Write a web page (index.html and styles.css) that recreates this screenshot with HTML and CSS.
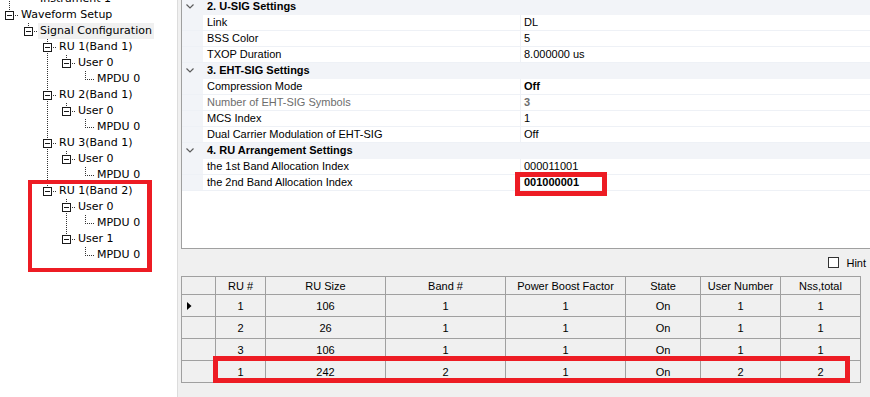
FILE: index.html
```html
<!DOCTYPE html>
<html>
<head>
<meta charset="utf-8">
<link rel="stylesheet" href="styles.css">
</head>
<body>
<svg class="defs" width="0" height="0" aria-hidden="true">
  <defs>
    <symbol id="pipe" viewBox="0 0 19 16"><line class="dot" x1="9.5" y1="0" x2="9.5" y2="16"/></symbol>
    <symbol id="boxT" viewBox="0 0 19 16">
      <line class="dot" x1="9.5" y1="0" x2="9.5" y2="4"/>
      <line class="dot" x1="15" y1="8.5" x2="19" y2="8.5"/>
      <rect class="bx" x="5.5" y="4.5" width="8" height="8"/>
      <line class="mn" x1="7" y1="8.5" x2="12" y2="8.5"/>
    </symbol>
    <symbol id="boxTB" viewBox="0 0 19 16">
      <line class="dot" x1="9.5" y1="0" x2="9.5" y2="4"/>
      <line class="dot" x1="9.5" y1="14" x2="9.5" y2="16"/>
      <line class="dot" x1="15" y1="8.5" x2="19" y2="8.5"/>
      <rect class="bx" x="5.5" y="4.5" width="8" height="8"/>
      <line class="mn" x1="7" y1="8.5" x2="12" y2="8.5"/>
    </symbol>
    <symbol id="leaf" viewBox="0 0 19 16">
      <line class="dot" x1="9.5" y1="0" x2="9.5" y2="9"/>
      <line class="dot" x1="11" y1="8.5" x2="19" y2="8.5"/>
    </symbol>
  </defs>
</svg>
<div class="app">
  <div class="tree">
    <div class="tree-list">
      <div class="tn"><svg class="g"><use href="#pipe"/></svg><svg class="g"><use href="#leaf"/></svg><span class="lbl">Instrument 1</span></div>
      <div class="tn"><svg class="g"><use href="#boxT"/></svg><span class="lbl">Waveform Setup</span></div>
      <div class="tn"><span class="g"></span><svg class="g"><use href="#boxT"/></svg><span class="lbl sel">Signal Configuration</span></div>

      <div class="tn"><span class="g"></span><span class="g"></span><svg class="g"><use href="#boxTB"/></svg><span class="lbl">RU 1(Band 1)</span></div>
      <div class="tn"><span class="g"></span><span class="g"></span><svg class="g"><use href="#pipe"/></svg><svg class="g"><use href="#boxT"/></svg><span class="lbl">User 0</span></div>
      <div class="tn"><span class="g"></span><span class="g"></span><svg class="g"><use href="#pipe"/></svg><span class="g"></span><svg class="g"><use href="#leaf"/></svg><span class="lbl">MPDU 0</span></div>

      <div class="tn"><span class="g"></span><span class="g"></span><svg class="g"><use href="#boxTB"/></svg><span class="lbl">RU 2(Band 1)</span></div>
      <div class="tn"><span class="g"></span><span class="g"></span><svg class="g"><use href="#pipe"/></svg><svg class="g"><use href="#boxT"/></svg><span class="lbl">User 0</span></div>
      <div class="tn"><span class="g"></span><span class="g"></span><svg class="g"><use href="#pipe"/></svg><span class="g"></span><svg class="g"><use href="#leaf"/></svg><span class="lbl">MPDU 0</span></div>

      <div class="tn"><span class="g"></span><span class="g"></span><svg class="g"><use href="#boxTB"/></svg><span class="lbl">RU 3(Band 1)</span></div>
      <div class="tn"><span class="g"></span><span class="g"></span><svg class="g"><use href="#pipe"/></svg><svg class="g"><use href="#boxT"/></svg><span class="lbl">User 0</span></div>
      <div class="tn"><span class="g"></span><span class="g"></span><svg class="g"><use href="#pipe"/></svg><span class="g"></span><svg class="g"><use href="#leaf"/></svg><span class="lbl">MPDU 0</span></div>

      <div class="tn"><span class="g"></span><span class="g"></span><svg class="g"><use href="#boxT"/></svg><span class="lbl">RU 1(Band 2)</span></div>
      <div class="tn"><span class="g"></span><span class="g"></span><span class="g"></span><svg class="g"><use href="#boxTB"/></svg><span class="lbl">User 0</span></div>
      <div class="tn"><span class="g"></span><span class="g"></span><span class="g"></span><svg class="g"><use href="#pipe"/></svg><svg class="g"><use href="#leaf"/></svg><span class="lbl">MPDU 0</span></div>
      <div class="tn"><span class="g"></span><span class="g"></span><span class="g"></span><svg class="g"><use href="#boxT"/></svg><span class="lbl">User 1</span></div>
      <div class="tn"><span class="g"></span><span class="g"></span><span class="g"></span><span class="g"></span><svg class="g"><use href="#leaf"/></svg><span class="lbl">MPDU 0</span></div>
    </div>
  </div>

  <div class="main">
    <div class="pgrid">
      <div class="pg-rows">
        <div class="pr pc"><span class="pm"><svg class="chev" width="8" height="5" viewBox="0 0 8 5"><polyline points="0.5,0.5 4,4 7.5,0.5"/></svg></span><span class="pt">2. U-SIG Settings</span></div>
        <div class="pr"><span class="pm"></span><span class="pn">Link</span><span class="pv">DL</span></div>
        <div class="pr"><span class="pm"></span><span class="pn">BSS Color</span><span class="pv">5</span></div>
        <div class="pr"><span class="pm"></span><span class="pn">TXOP Duration</span><span class="pv">8.000000 us</span></div>
        <div class="pr pc"><span class="pm"><svg class="chev" width="8" height="5" viewBox="0 0 8 5"><polyline points="0.5,0.5 4,4 7.5,0.5"/></svg></span><span class="pt">3. EHT-SIG Settings</span></div>
        <div class="pr"><span class="pm"></span><span class="pn">Compression Mode</span><span class="pv b">Off</span></div>
        <div class="pr ro"><span class="pm"></span><span class="pn">Number of EHT-SIG Symbols</span><span class="pv b">3</span></div>
        <div class="pr"><span class="pm"></span><span class="pn">MCS Index</span><span class="pv">1</span></div>
        <div class="pr"><span class="pm"></span><span class="pn">Dual Carrier Modulation of EHT-SIG</span><span class="pv">Off</span></div>
        <div class="pr pc"><span class="pm"><svg class="chev" width="8" height="5" viewBox="0 0 8 5"><polyline points="0.5,0.5 4,4 7.5,0.5"/></svg></span><span class="pt">4. RU Arrangement Settings</span></div>
        <div class="pr"><span class="pm"></span><span class="pn">the 1st Band Allocation Index</span><span class="pv">000011001</span></div>
        <div class="pr"><span class="pm"></span><span class="pn">the 2nd Band Allocation Index</span><span class="pv b">001000001</span></div>
      </div>
    </div>

    <div class="hintbar">
      <span class="check"></span><span class="hint">Hint</span>
    </div>

    <div class="dgrid">
      <div class="dc"></div><div class="dc">RU #</div><div class="dc">RU Size</div><div class="dc">Band #</div><div class="dc">Power Boost Factor</div><div class="dc">State</div><div class="dc">User Number</div><div class="dc">Nss,total</div>
      <div class="dc rh"><svg width="5" height="8" viewBox="0 0 5 8"><polygon points="0,0 4.5,4 0,8"/></svg></div><div class="dc">1</div><div class="dc">106</div><div class="dc">1</div><div class="dc">1</div><div class="dc">On</div><div class="dc">1</div><div class="dc">1</div>
      <div class="dc rh"></div><div class="dc">2</div><div class="dc">26</div><div class="dc">1</div><div class="dc">1</div><div class="dc">On</div><div class="dc">1</div><div class="dc">1</div>
      <div class="dc rh"></div><div class="dc">3</div><div class="dc">106</div><div class="dc">1</div><div class="dc">1</div><div class="dc">On</div><div class="dc">1</div><div class="dc">1</div>
      <div class="dc rh"></div><div class="dc">1</div><div class="dc">242</div><div class="dc">2</div><div class="dc">1</div><div class="dc">On</div><div class="dc">2</div><div class="dc">2</div>
    </div>
  </div>
</div>

<div class="mark mark-tree"></div>
<div class="mark mark-value"></div>
<div class="mark mark-row"></div>
</body>
</html>
```

FILE: styles.css
```css
* { box-sizing: border-box; }
html, body { margin: 0; padding: 0; }
body {
  width: 870px;
  height: 397px;
  overflow: hidden;
  position: relative;
  background: #f0f0f0;
}
.defs { display: block; width: 0; height: 0; overflow: hidden; }

.app { display: flex; height: 397px; }

/* ---------- tree ---------- */
.tree {
  width: 178px;
  flex: none;
  background: #fff;
  border-right: 1px solid #dcdcdc;
  font-family: "DejaVu Sans", Verdana, sans-serif;
  font-size: 11px;
  color: #000;
  overflow: hidden;
}
.tree-list { margin-top: -9px; }
.tn { display: flex; height: 16px; }
.g { width: 19px; height: 16px; flex: none; display: block; }
.dot { stroke: #333; stroke-width: 1; stroke-dasharray: 1 1; fill: none; }
.bx { fill: #fff; stroke: #1a1a1a; stroke-width: 1; }
.mn { stroke: #1a1a1a; stroke-width: 1; }
.lbl { line-height: 16px; padding: 0 2px; white-space: nowrap; }
.lbl.sel { background: #f0f0f0; }

/* ---------- right side ---------- */
.main {
  flex: 1;
  display: flex;
  flex-direction: column;
  padding-left: 3px;
  background: #f0f0f0;
  min-width: 0;
}

.pgrid {
  height: 249px;
  flex: none;
  background: #fff;
  border-left: 1px solid #a0a0a0;
  border-bottom: 1px solid #a0a0a0;
  overflow: hidden;
  font-family: "Liberation Sans", Arial, sans-serif;
  font-size: 11px;
  color: #000;
}
.pg-rows { margin-top: -1px; }
.pr { display: flex; height: 16px; border-bottom: 1px solid #eef1f6; }
.pm { width: 21px; flex: none; background: #f2f4f8; }
.pn {
  width: 318px;
  flex: none;
  padding-left: 4px;
  border-right: 1px solid #eef1f6;
  line-height: 15px;
  white-space: nowrap;
  overflow: hidden;
}
.pv { flex: 1; padding-left: 3px; line-height: 15px; white-space: nowrap; }
.b { font-weight: bold; }
.ro .pn, .ro .pv { color: #6d6d6d; }
.pc { background: #f2f4f8; border-bottom-color: #f2f4f8; }
.pc .pm { display: flex; align-items: center; padding-left: 4px; }
.pt { padding-left: 4px; line-height: 15px; font-weight: bold; white-space: nowrap; }
.chev polyline { fill: none; stroke: #5c5c5c; stroke-width: 1.2; }

.hintbar {
  height: 27px;
  flex: none;
  display: flex;
  justify-content: flex-end;
  align-items: center;
  padding-right: 4px;
  font-family: "Liberation Sans", Arial, sans-serif;
  font-size: 11px;
}
.check {
  width: 11px;
  height: 11px;
  border: 1px solid #333;
  background: #fff;
  margin-right: 7px;
}

.dgrid {
  display: grid;
  grid-template-columns: 34px 50px 120px 120px 120px 75px 80px 80px;
  grid-template-rows: 18px repeat(4, 22px);
  width: max-content;
  border-left: 1px solid #a0a0a0;
  border-top: 1px solid #a0a0a0;
  font-family: "Liberation Sans", Arial, sans-serif;
  font-size: 11px;
  color: #000;
  background: #f0f0f0;
}
.dc {
  border-right: 1px solid #a0a0a0;
  border-bottom: 1px solid #a0a0a0;
  display: flex;
  align-items: center;
  justify-content: center;
  white-space: nowrap;
}
.dc.rh { justify-content: flex-start; padding-left: 5px; }
.dc.rh polygon { fill: #000; }

/* ---------- red annotation boxes ---------- */
.mark { position: absolute; border: 5px solid #ed1c24; }
.mark-tree { left: 28px; top: 180px; width: 124px; height: 92px; border-width: 4px 5px 4px 4px; }
.mark-value { left: 515px; top: 172px; width: 92px; height: 24px; }
.mark-row { left: 213px; top: 356px; width: 637px; height: 27px; }
```
